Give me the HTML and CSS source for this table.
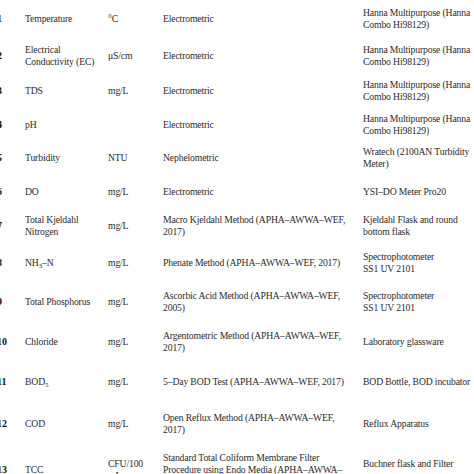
FILE: index.html
```html
<!DOCTYPE html>
<html>
<head>
<meta charset="utf-8">
<link rel="stylesheet" href="styles.css">
</head>
<body>
<table class="params">
  <colgroup>
    <col class="c-num"><col class="c-param"><col class="c-unit"><col class="c-method"><col class="c-equip">
  </colgroup>
  <tbody>
    <tr class="h37"><td class="num">1</td><td>Temperature</td><td>°C</td><td>Electrometric</td><td>Hanna Multipurpose (Hanna<br>Combo Hi98129)</td></tr>
    <tr class="h37"><td class="num">2</td><td>Electrical<br>Conductivity (EC)</td><td>μS/cm</td><td>Electrometric</td><td>Hanna Multipurpose (Hanna<br>Combo Hi98129)</td></tr>
    <tr class="h34"><td class="num">3</td><td>TDS</td><td>mg/L</td><td>Electrometric</td><td>Hanna Multipurpose (Hanna<br>Combo Hi98129)</td></tr>
    <tr class="h33"><td class="num">4</td><td>pH</td><td></td><td>Electrometric</td><td>Hanna Multipurpose (Hanna<br>Combo Hi98129)</td></tr>
    <tr class="h34"><td class="num">5</td><td>Turbidity</td><td>NTU</td><td>Nephelometric</td><td>Wratech (2100AN Turbidity<br>Meter)</td></tr>
    <tr class="h33"><td class="num">6</td><td>DO</td><td>mg/L</td><td>Electrometric</td><td>YSI–DO Meter Pro20</td></tr>
    <tr class="h36"><td class="num">7</td><td>Total Kjeldahl<br>Nitrogen</td><td>mg/L</td><td>Macro Kjeldahl Method (APHA–AWWA–WEF,<br>2017)</td><td>Kjeldahl Flask and round<br>bottom flask</td></tr>
    <tr class="h38"><td class="num">8</td><td>NH<sub>3</sub>–N</td><td>mg/L</td><td>Phenate Method (APHA–AWWA–WEF, 2017)</td><td>Spectrophotometer<br>SS1 UV 2101</td></tr>
    <tr class="h40"><td class="num">9</td><td>Total Phosphorus</td><td>mg/L</td><td>Ascorbic Acid Method (APHA–AWWA–WEF,<br>2005)</td><td>Spectrophotometer<br>SS1 UV 2101</td></tr>
    <tr class="h40"><td class="num">10</td><td>Chloride</td><td>mg/L</td><td>Argentometric Method (APHA–AWWA–WEF,<br>2017)</td><td>Laboratory glassware</td></tr>
    <tr class="h40"><td class="num">11</td><td>BOD<sub>5</sub></td><td>mg/L</td><td>5–Day BOD Test (APHA–AWWA–WEF, 2017)</td><td>BOD Bottle, BOD incubator</td></tr>
    <tr class="h43"><td class="num">12</td><td>COD</td><td>mg/L</td><td>Open Reflux Method (APHA–AWWA–WEF,<br>2017)</td><td>Reflux Apparatus</td></tr>
    <tr class="h50"><td class="num">13</td><td>TCC</td><td>CFU/100<br>mL</td><td>Standard Total Coliform Membrane Filter<br>Procedure using Endo Media (APHA–AWWA–<br>WEF, 2017)</td><td>Buchner flask and Filter<br>paper</td></tr>
  </tbody>
</table>
</body>
</html>
```
FILE: styles.css
```css
html, body {
  margin: 0;
  padding: 0;
  background: #ffffff;
  overflow: hidden;
  width: 474px;
  height: 474px;
}
.params {
  margin-left: -3px;
  border-collapse: collapse;
  table-layout: fixed;
  width: 496px;
  font-family: "Liberation Serif", "Times New Roman", serif;
  font-size: 9.7px;
  letter-spacing: -0.15px;
  line-height: 12px;
  color: #2b2b2b;
}
.c-num { width: 28px; }
.c-param { width: 83px; }
.c-unit { width: 55px; }
.c-method { width: 200px; }
.c-equip { width: 130px; }
.params td {
  padding: 0;
  vertical-align: middle;
  white-space: nowrap;
  overflow: visible;
}
.params td.num {
  font-weight: bold;
  font-size: 10px;
  letter-spacing: 0;
  color: #111;
}
.params sub {
  font-size: 7px;
  line-height: 0;
  vertical-align: -2px;
}
.h33 { height: 33px; }
.h34 { height: 34px; }
.h36 { height: 36px; }
.h37 { height: 37px; }
.h38 { height: 38px; }
.h40 { height: 40px; }
.h43 { height: 43px; }
.h50 { height: 50px; }
```
